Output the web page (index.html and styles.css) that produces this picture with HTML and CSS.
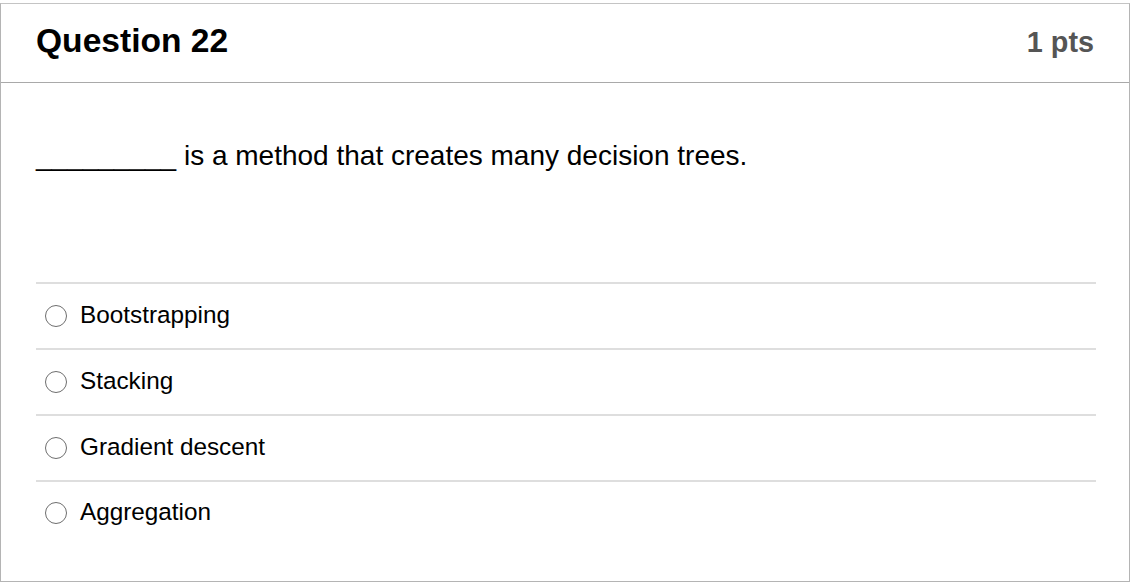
FILE: index.html
```html
<!DOCTYPE html>
<html>
<head>
<meta charset="utf-8">
<link rel="stylesheet" href="styles.css">
</head>
<body>
<div class="card">
  <div class="header">
    <span class="title">Question 22</span>
    <span class="pts">1 pts</span>
  </div>
  <div class="body">
    <p class="question">_________ is a method that creates many decision trees.</p>
    <div class="answers">
      <div class="answer"><span class="radio"></span><span class="label">Bootstrapping</span></div>
      <div class="answer"><span class="radio"></span><span class="label">Stacking</span></div>
      <div class="answer"><span class="radio"></span><span class="label">Gradient descent</span></div>
      <div class="answer"><span class="radio"></span><span class="label">Aggregation</span></div>
    </div>
  </div>
</div>
</body>
</html>
```
FILE: styles.css
```css
html, body {
  margin: 0;
  padding: 0;
  background: #fff;
}
body {
  font-family: "Liberation Sans", Arial, sans-serif;
  color: #000;
  padding-top: 3px;
}
.card {
  box-sizing: border-box;
  width: 1130px;
  border: 1px solid #b4b4b4;
  border-top-color: #c4c4c4;
}
.header {
  display: flex;
  justify-content: space-between;
  align-items: baseline;
  padding: 17px 35px 21px 35px;
  border-bottom: 1px solid #a9a9a9;
  line-height: 40px;
  height: 40px;
}
.title {
  font-size: 33.6px;
  font-weight: bold;
  color: #000;
}
.pts {
  font-size: 28.8px;
  font-weight: bold;
  color: #555;
}
.body {
  padding: 53px 33px 35px 35px;
}
.question {
  margin: 0;
  font-size: 28px;
  line-height: 40px;
}
.answers {
  margin-top: 106px;
}
.answer {
  display: flex;
  align-items: center;
  height: 64px;
  border-top: 2px solid #dedede;
  font-size: 24.3px;
}
.answer:last-child {
  height: 62px;
  padding-bottom: 2px;
}
.radio {
  box-sizing: border-box;
  width: 22px;
  height: 22px;
  border: 1.6px solid #6e6e6e;
  border-radius: 50%;
  margin-left: 9px;
  margin-right: 13px;
  background: #fff;
}
.label {
  line-height: 28px;
  padding-bottom: 3px;
}
```
